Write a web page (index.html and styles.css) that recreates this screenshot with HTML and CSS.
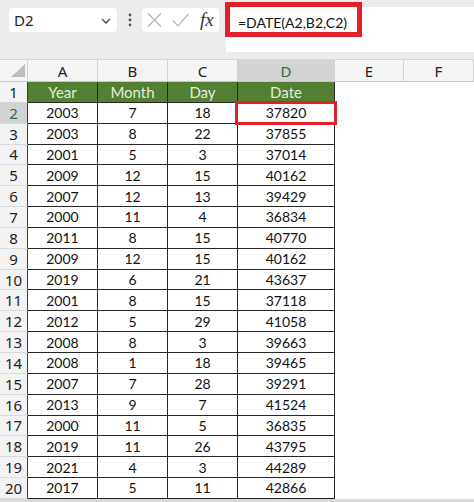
FILE: index.html
```html
<!DOCTYPE html>
<html>
<head>
<meta charset="utf-8">
<link rel="stylesheet" href="styles.css">
</head>
<body>
<div class="app">
  <div class="topbar">
    <div class="namebox">
      <span class="name">D2</span>
      <svg class="chev" width="10" height="6" viewBox="0 0 10 6"><path d="M1 1 L5 5 L9 1" fill="none" stroke="#444" stroke-width="1.3"/></svg>
    </div>
    <div class="dots">
      <svg width="4" height="14" viewBox="0 0 4 14"><circle cx="2" cy="2" r="1.4" fill="#555"/><circle cx="2" cy="7" r="1.4" fill="#555"/><circle cx="2" cy="12" r="1.4" fill="#555"/></svg>
    </div>
    <div class="fxbox">
      <svg class="ico-x" width="15" height="14" viewBox="0 0 15 14"><path d="M1 0.5 L14 13.5 M14 0.5 L1 13.5" stroke="#b5b5b5" stroke-width="1.2" fill="none"/></svg>
      <svg class="ico-ok" width="17" height="14" viewBox="0 0 17 14"><path d="M0.8 7.5 L6 12.8 L16.3 1" stroke="#b5b5b5" stroke-width="1.2" fill="none"/></svg>
      <span class="fx">fx</span>
    </div>
    <div class="formula">
      <span class="ftext">=DATE(A2,B2,C2)</span>
      <div class="hl-formula"></div>
    </div>
  </div>
  <div class="sheet" id="sheet">
    <div class="ch corner"><svg width="14" height="13" viewBox="0 0 14 13"><path d="M14 0 L14 13 L0 13 Z" fill="#bdbdbd"/></svg></div>
    <div class="ch">A</div>
    <div class="ch">B</div>
    <div class="ch">C</div>
    <div class="ch sel">D</div>
    <div class="ch">E</div>
    <div class="ch">F</div>

    <div class="rh">1</div><div class="c hd">Year</div><div class="c hd">Month</div><div class="c hd">Day</div><div class="c hd">Date</div><div class="e"></div><div class="e"></div>
    <div class="rh sel">2</div><div class="c">2003</div><div class="c">7</div><div class="c">18</div><div class="c">37820</div><div class="e"></div><div class="e"></div>
    <div class="rh">3</div><div class="c">2003</div><div class="c">8</div><div class="c">22</div><div class="c">37855</div><div class="e"></div><div class="e"></div>
    <div class="rh">4</div><div class="c">2001</div><div class="c">5</div><div class="c">3</div><div class="c">37014</div><div class="e"></div><div class="e"></div>
    <div class="rh">5</div><div class="c">2009</div><div class="c">12</div><div class="c">15</div><div class="c">40162</div><div class="e"></div><div class="e"></div>
    <div class="rh">6</div><div class="c">2007</div><div class="c">12</div><div class="c">13</div><div class="c">39429</div><div class="e"></div><div class="e"></div>
    <div class="rh">7</div><div class="c">2000</div><div class="c">11</div><div class="c">4</div><div class="c">36834</div><div class="e"></div><div class="e"></div>
    <div class="rh">8</div><div class="c">2011</div><div class="c">8</div><div class="c">15</div><div class="c">40770</div><div class="e"></div><div class="e"></div>
    <div class="rh">9</div><div class="c">2009</div><div class="c">12</div><div class="c">15</div><div class="c">40162</div><div class="e"></div><div class="e"></div>
    <div class="rh">10</div><div class="c">2019</div><div class="c">6</div><div class="c">21</div><div class="c">43637</div><div class="e"></div><div class="e"></div>
    <div class="rh">11</div><div class="c">2001</div><div class="c">8</div><div class="c">15</div><div class="c">37118</div><div class="e"></div><div class="e"></div>
    <div class="rh">12</div><div class="c">2012</div><div class="c">5</div><div class="c">29</div><div class="c">41058</div><div class="e"></div><div class="e"></div>
    <div class="rh">13</div><div class="c">2008</div><div class="c">8</div><div class="c">3</div><div class="c">39663</div><div class="e"></div><div class="e"></div>
    <div class="rh">14</div><div class="c">2008</div><div class="c">1</div><div class="c">18</div><div class="c">39465</div><div class="e"></div><div class="e"></div>
    <div class="rh">15</div><div class="c">2007</div><div class="c">7</div><div class="c">28</div><div class="c">39291</div><div class="e"></div><div class="e"></div>
    <div class="rh">16</div><div class="c">2013</div><div class="c">9</div><div class="c">7</div><div class="c">41524</div><div class="e"></div><div class="e"></div>
    <div class="rh">17</div><div class="c">2000</div><div class="c">11</div><div class="c">5</div><div class="c">36835</div><div class="e"></div><div class="e"></div>
    <div class="rh">18</div><div class="c">2019</div><div class="c">11</div><div class="c">26</div><div class="c">43795</div><div class="e"></div><div class="e"></div>
    <div class="rh">19</div><div class="c">2021</div><div class="c">4</div><div class="c">3</div><div class="c">44289</div><div class="e"></div><div class="e"></div>
    <div class="rh">20</div><div class="c">2017</div><div class="c">5</div><div class="c">11</div><div class="c">42866</div><div class="e"></div><div class="e"></div>

    <div class="hl-cell"></div>
  </div>
</div>
</body>
</html>
```

FILE: styles.css
```css
* { box-sizing: border-box; }
html, body { margin: 0; padding: 0; }
body {
  width: 474px;
  height: 502px;
  overflow: hidden;
  background: #d9d9d9;
  font-family: "Noto Sans", "Open Sans", sans-serif;
}
.app { width: 474px; }

.topbar {
  height: 60px;
  background: #ececec;
  border-bottom: 1px solid #d4d4d4;
  display: flex;
  align-items: flex-start;
  padding: 8px 0 0 9px;
}
.namebox {
  width: 108px;
  height: 24px;
  background: #fff;
  border-radius: 4px;
  display: flex;
  align-items: center;
  justify-content: space-between;
  padding: 0 6px 0 5px;
}
.name {
  font-size: 15px;
  color: #222;
  line-height: 1;
}
.chev { margin-top: 1px; }
.dots {
  width: 25px;
  height: 24px;
  display: flex;
  align-items: center;
  justify-content: center;
}
.fxbox {
  width: 77px;
  height: 24px;
  background: #fff;
  border-radius: 4px;
  display: flex;
  align-items: center;
  padding-left: 5px;
}
.ico-ok { margin-left: 10px; }
.fx {
  margin-left: 11px;
  font-family: "Liberation Serif", "DejaVu Serif", serif;
  font-style: italic;
  font-size: 19px;
  color: #333;
  line-height: 1;
  margin-top: -2px;
}
.formula {
  position: relative;
  flex: 1;
  margin-left: 7px;
  margin-top: -1px;
  height: 45px;
  background: #fff;
  padding: 4px 0 0 12px;
}
.ftext {
  font-family: Lato, "Liberation Sans", sans-serif;
  font-size: 14px;
  line-height: 19px;
  color: #111;
}
.hl-formula {
  position: absolute;
  left: -1px;
  top: -5px;
  width: 137px;
  height: 35px;
  border: 5px solid #e3202a;
}

.sheet {
  position: relative;
  display: grid;
  grid-template-columns: 28px 70px 70px 70px 97px 69px 70px;
  grid-template-rows: 22px repeat(20, 20.85px);
  background: #fff;
}
.ch {
  background: #f5f5f5;
  border-right: 1px solid #d2d2d2;
  border-bottom: 1px solid #c6c6c6;
  display: flex;
  align-items: center;
  justify-content: center;
  font-size: 15px;
  color: #222;
}
.ch.corner {
  align-items: flex-end;
  justify-content: flex-end;
  padding: 0 2px 4px 0;
}
.ch.sel, .rh.sel {
  background: #d3d3d3;
  color: #2c6a44;
}
.rh {
  background: #f3f3f3;
  border-right: 1px solid #3a3a3a;
  border-bottom: 1px solid #d9d9d9;
  display: flex;
  align-items: center;
  justify-content: center;
  font-size: 15px;
  color: #222;
}
.c {
  border-right: 1px solid #262626;
  border-bottom: 1px solid #262626;
  display: flex;
  align-items: center;
  justify-content: center;
  font-family: Lato, "Liberation Sans", sans-serif;
  font-size: 14px;
  color: #111;
  background: #fff;
}
.c.hd {
  background: #527f31;
  color: #e3eedb;
  font-size: 15px;
}
.e { background: #fff; }
.hl-cell {
  position: absolute;
  left: 235px;
  top: 41px;
  width: 102px;
  height: 24px;
  border: 3px solid #e3202a;
}
```
